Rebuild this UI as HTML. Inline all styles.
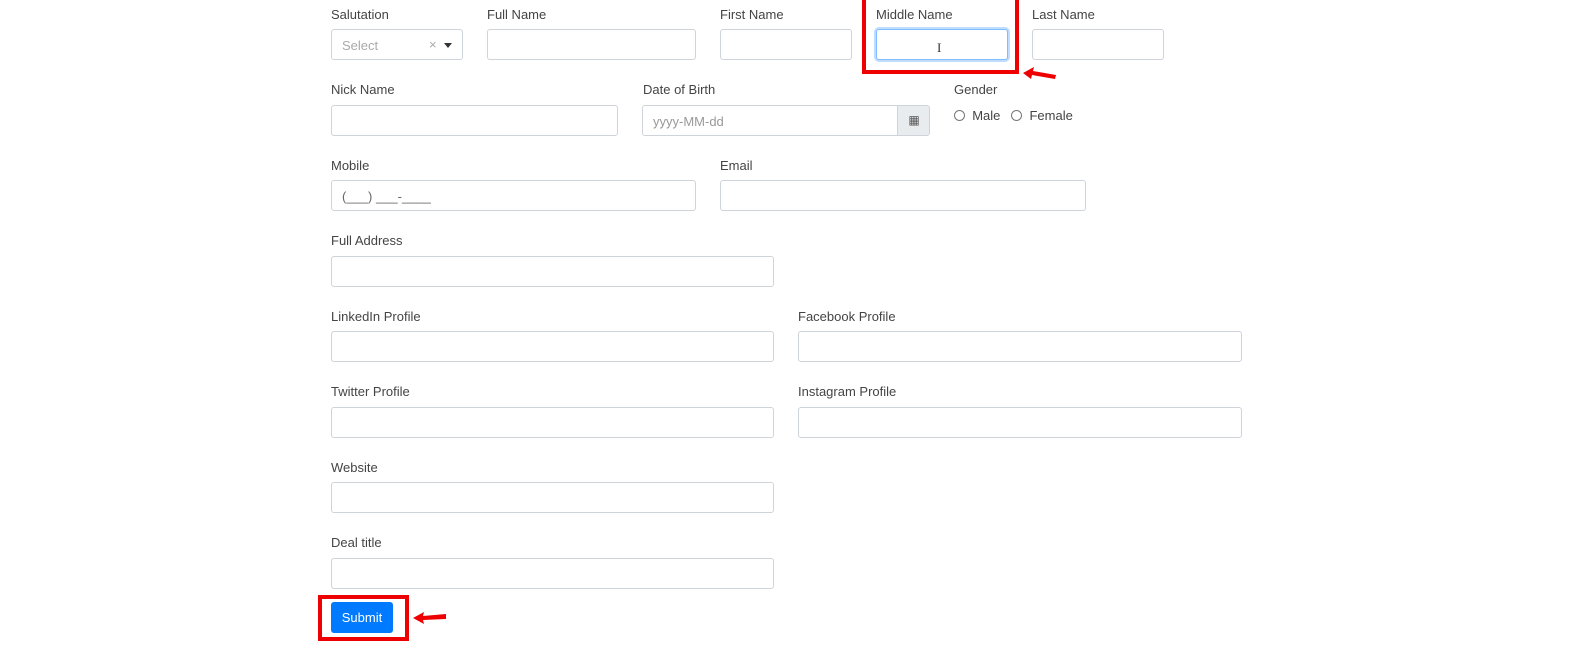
<!DOCTYPE html><html><head><style>
body{margin:0;width:1574px;height:645px;background:#fff;font-family:"Liberation Sans",sans-serif;position:relative;overflow:hidden}
.l{position:absolute;font-size:13px;color:#444}
.i{position:absolute;height:29px;border:1px solid #ced4da;border-radius:3px;background:#fff;font-size:13px;color:#999;box-sizing:content-box}
.r{position:absolute;border:4px solid #ee0000}
</style></head><body>
<div class="l" style="left:331px;top:7px">Salutation</div>
<div class="l" style="left:487px;top:7px">Full Name</div>
<div class="l" style="left:720px;top:7px">First Name</div>
<div class="l" style="left:876px;top:7px">Middle Name</div>
<div class="l" style="left:1032px;top:7px">Last Name</div>
<div class="i" style="left:331px;top:29px;width:130px"><span style="position:absolute;left:10px;top:8px;color:#aaa">Select</span><span style="position:absolute;left:97px;top:7px;color:#aaa">×</span><span style="position:absolute;left:112px;top:13px;border:4px solid transparent;border-top:5px solid #333"></span></div>
<div class="i" style="left:487px;top:29px;width:207px"></div>
<div class="i" style="left:720px;top:29px;width:130px"></div>
<div class="i" style="left:876px;top:29px;width:130px;border-color:#80bdff;box-shadow:0 0 0 2px rgba(0,123,255,.25)"><span style="position:absolute;left:60px;top:10px;color:#333;font-family:'Liberation Serif',serif">I</span></div>
<div class="i" style="left:1032px;top:29px;width:130px"></div>
<div class="r" style="left:862px;top:-4px;width:149px;height:70px"></div>
<svg style="position:absolute;left:1020px;top:66px" width="40" height="16"><path d="M3 7 L14 1 L13 5 L36 9 L35 13 L12 9 L11 13Z" fill="#e00"/></svg>

<div class="l" style="left:331px;top:82px">Nick Name</div>
<div class="l" style="left:643px;top:82px">Date of Birth</div>
<div class="l" style="left:954px;top:82px">Gender</div>
<div class="i" style="left:331px;top:105px;width:285px"></div>
<div class="i" style="left:642px;top:105px;width:286px;overflow:hidden"><span style="position:absolute;left:10px;top:8px">yyyy-MM-dd</span><div style="position:absolute;left:254px;top:0;width:32px;height:29px;background:#e9ecef;border-left:1px solid #ced4da;text-align:center;line-height:29px;color:#555;font-size:12px">▦</div></div>
<div class="l" style="left:954px;top:108px"><span style="display:inline-block;width:9px;height:9px;border:1px solid #777;border-radius:50%;vertical-align:-1px"></span>&nbsp; Male &nbsp;&nbsp;<span style="display:inline-block;width:9px;height:9px;border:1px solid #777;border-radius:50%;vertical-align:-1px"></span>&nbsp; Female</div>

<div class="l" style="left:331px;top:158px">Mobile</div>
<div class="l" style="left:720px;top:158px">Email</div>
<div class="i" style="left:331px;top:180px;width:363px"><span style="position:absolute;left:10px;top:8px;color:#666">(___) ___-____</span></div>
<div class="i" style="left:720px;top:180px;width:364px"></div>

<div class="l" style="left:331px;top:233px">Full Address</div>
<div class="i" style="left:331px;top:256px;width:441px"></div>
<div class="l" style="left:331px;top:309px">LinkedIn Profile</div>
<div class="l" style="left:798px;top:309px">Facebook Profile</div>
<div class="i" style="left:331px;top:331px;width:441px"></div>
<div class="i" style="left:798px;top:331px;width:442px"></div>
<div class="l" style="left:331px;top:384px">Twitter Profile</div>
<div class="l" style="left:798px;top:384px">Instagram Profile</div>
<div class="i" style="left:331px;top:407px;width:441px"></div>
<div class="i" style="left:798px;top:407px;width:442px"></div>
<div class="l" style="left:331px;top:460px">Website</div>
<div class="i" style="left:331px;top:482px;width:441px"></div>
<div class="l" style="left:331px;top:535px">Deal title</div>
<div class="i" style="left:331px;top:558px;width:441px"></div>

<div style="position:absolute;left:331px;top:602px;width:62px;height:31px;background:#007bff;border-radius:3px;color:#fff;font-size:13px;text-align:center;line-height:31px">Submit</div>
<div class="r" style="left:318px;top:595px;width:83px;height:38px"></div>
<svg style="position:absolute;left:410px;top:610px" width="40" height="16"><path d="M3 8 L14 2 L13 6 L36 4 L36 9 L13 10 L14 14Z" fill="#e00"/></svg>
</body></html>
